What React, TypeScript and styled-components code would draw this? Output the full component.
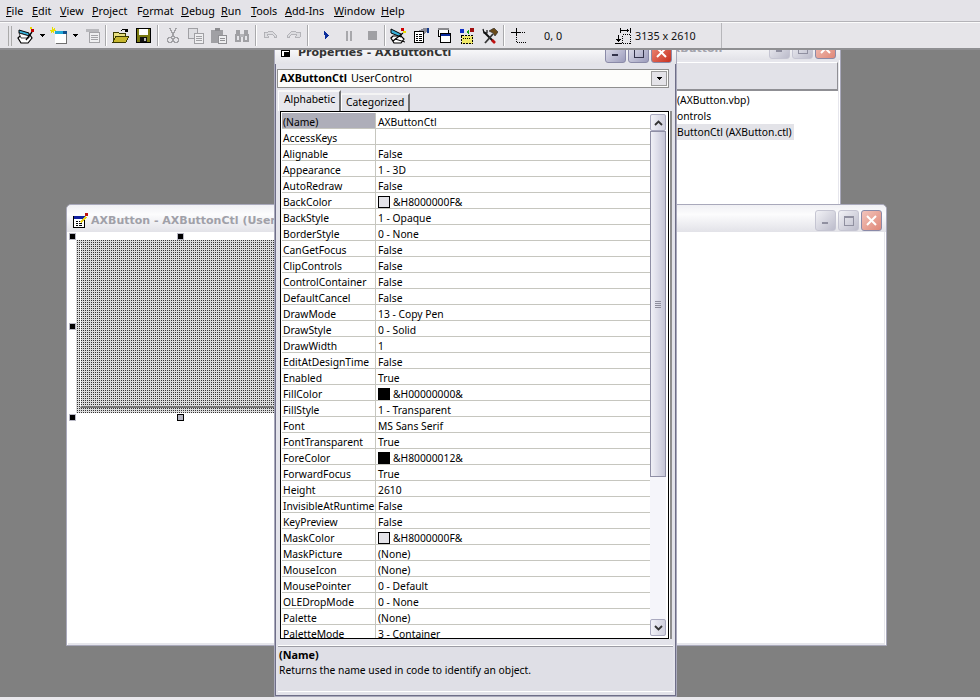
import React from "react";
import styled, { createGlobalStyle } from "styled-components";

const Global = createGlobalStyle`
  html, body { margin: 0; padding: 0; background: #e4e3e8; }
  body { font-family: "Noto Sans", "Liberation Sans", sans-serif; font-size: 10.3px; color: #000; }
`;

const Page = styled.div`
  width: 980px;
  height: 700px;
  overflow: hidden;
  display: flex;
  flex-direction: column;
  background: #e9e8ec;
`;

const MenuBar = styled.div`
  height: 22px;
  flex: none;
  display: flex;
  align-items: center;
  background: #e4e3e8;
  border-bottom: 1px solid #b4b3b8;
  box-sizing: border-box;
  font-size: 10.8px;
`;
const MenuItem = styled.span<{ $w: number }>`
  width: ${(p) => p.$w}px;
  padding-bottom: 1px;
  u { text-underline-offset: 1px; }
`;

const ToolBar = styled.div`
  height: 28px;
  flex: none;
  display: flex;
  align-items: center;
  background: #e6e5e9;
  border-top: 1px solid #fbfbfb;
  border-bottom: 2px solid #8f8f92;
  box-sizing: border-box;
  padding-left: 8px;
  position: relative;
  z-index: 5;
  font-size: 10.8px;
`;
const Grip = styled.div`
  width: 2px;
  height: 20px;
  border-left: 1px solid #aaa;
  border-right: 1px solid #aaa;
  margin-right: 2px;
`;
const ToolBtn = styled.div<{ $w?: number }>`
  width: ${(p) => p.$w ?? 23}px;
  height: 23px;
  flex: none;
  display: flex;
  align-items: center;
  justify-content: center;
`;
const Sep = styled.div<{ $l?: number; $r?: number }>`
  width: 1px;
  height: 21px;
  flex: none;
  margin: 0 ${(p) => p.$r ?? 1}px 0 ${(p) => p.$l ?? 1}px;
  background: #a9a9ac;
  border-right: 1px solid #fff;
`;
const Coord = styled.span<{ $w: number; $pad: number }>`
  width: ${(p) => p.$w}px;
  flex: none;
  box-sizing: border-box;
  padding-left: ${(p) => p.$pad}px;
  color: #111;
`;
const ToolEnd = styled.div`
  width: 1px;
  height: 100%;
  flex: none;
  background: #b6b6ba;
`;

const Desktop = styled.div`
  position: relative;
  height: 647px;
  flex: none;
  overflow: hidden;
  background: #808080;
`;

const Win = styled.div<{ $x: number; $y: number; $w: number; $h: number; $z: number }>`
  position: absolute;
  left: ${(p) => p.$x}px;
  top: ${(p) => p.$y}px;
  width: ${(p) => p.$w}px;
  height: ${(p) => p.$h}px;
  z-index: ${(p) => p.$z};
  box-sizing: border-box;
  display: flex;
  flex-direction: column;
  background: #e6e6ec;
  border: 1px solid #a9a9bb;
  border-radius: 5px 5px 0 0;
  box-shadow: inset 1px 0 0 #fff, inset -1px 0 0 #fff;
`;
const TitleBar = styled.div`
  height: 27px;
  flex: none;
  box-sizing: border-box;
  display: flex;
  align-items: center;
  padding: 3px 4px 0 6px;
  background: linear-gradient(#f0f0f4, #fcfcfd 35%, #e2e2e8);
  border-radius: 5px 5px 0 0;
`;
const TitleText = styled.span<{ $c: string; $pad: number }>`
  flex: 1;
  padding-left: ${(p) => p.$pad}px;
  white-space: nowrap;
  overflow: hidden;
  font-family: "DejaVu Sans", sans-serif;
  font-weight: bold;
  font-size: 11px;
  color: ${(p) => p.$c};
`;
const CapBtn = styled.div<{ $c?: string; $faded?: boolean }>`
  width: 21px;
  height: 21px;
  flex: none;
  margin-left: 2px;
  box-sizing: border-box;
  border: 1px solid ${(p) => (p.$faded ? "#c5c5d2" : "#8a8aa8")};
  border-radius: 3px;
  background: ${(p) =>
    p.$c ?? (p.$faded ? "linear-gradient(135deg,#f2f2f6,#bcbccb)" : "linear-gradient(135deg,#e8e8f2,#9c9cbc)")};
  display: flex;
  align-items: center;
  justify-content: center;
`;

// properties window
const PropBody = styled.div`
  flex: 1;
  display: flex;
  flex-direction: column;
  min-height: 0;
  padding: 5px 2px 3px 2px;
  background: #e3e3ea;
  border-left: 1px solid #6e6e88;
  border-right: 1px solid #6e6e88;
  border-bottom: 1px solid #6e6e88;
`;
const Combo = styled.div`
  height: 19px;
  margin: 0 4px 0 -1px;
  flex: none;
  display: flex;
  align-items: center;
  background: #fdfdfb;
  border: 1px solid #8f8f8f;
  box-sizing: border-box;
  padding: 0 0 2px 2px;
  gap: 4px;
  font-size: 10.8px;
  b { font-weight: bold; }
`;
const ComboArrow = styled.div`
  width: 16px;
  height: 15px;
  margin: 2px 1px 0 auto;
  background: #e4e3e8;
  border: 1px solid #9b9b9b;
  box-sizing: border-box;
  display: flex;
  align-items: center;
  justify-content: center;
`;
const Tabs = styled.div`
  height: 23px;
  flex: none;
  display: flex;
  align-items: flex-end;
`;
const Tab = styled.div<{ $on?: boolean }>`
  height: ${(p) => (p.$on ? 21 : 18)}px;
  width: ${(p) => (p.$on ? 63 : 69)}px;
  padding-left: ${(p) => (p.$on ? 5 : 4)}px;
  padding-bottom: ${(p) => (p.$on ? 5 : 2)}px;
  display: flex;
  align-items: center;
  box-sizing: border-box;
  background: ${(p) => (p.$on ? "#e7e7ec" : "#e3e3e8")};
  border-top: 2px solid ${(p) => (p.$on ? "#f8f8f8" : "#f4f4f4")};
  border-left: 1px solid #fff;
  border-right: 2px solid #6f6f6f;
`;
const GridFrame = styled.div`
  height: 528px;
  margin: 0 4px 0 2px;
  flex: none;
  display: flex;
  overflow: hidden;
  box-sizing: border-box;
  background: #fff;
  border: 1px solid #000;
  padding: 1px 2px 0 1px;
  box-shadow: 1px 0 0 #fff, 3px 0 0 #8e8e8e;
`;
const Rows = styled.div`
  flex: 1;
  overflow: hidden;
`;
const Row = styled.div`
  height: 16px;
  display: flex;
  box-sizing: border-box;
  border-bottom: 1px solid #c6c6bf;
  white-space: nowrap;
`;
const NameCell = styled.div<{ $sel?: boolean }>`
  width: 94px;
  flex: none;
  box-sizing: border-box;
  padding-left: 1px;
  line-height: 18px;
  background: ${(p) => (p.$sel ? "#aeaeb9" : "#fff")};
  border-right: 1px solid #c6c6bf;
`;
const ValueCell = styled.div`
  flex: 1;
  display: flex;
  align-items: center;
  padding: 1px 0 0 2px;
  height: 15px;
  line-height: 16px;
`;
const Swatch = styled.i<{ $c: string }>`
  width: 12px;
  height: 12px;
  flex: none;
  box-sizing: border-box;
  margin-right: 3px;
  background: ${(p) => p.$c};
  border: 1px solid #000;
`;
const Scroll = styled.div`
  width: 16px;
  flex: none;
  margin: 1px 0 2px;
  display: flex;
  flex-direction: column;
  background: #f5f5fa;
`;
const ScrollBtn = styled.div`
  height: 17px;
  flex: none;
  box-sizing: border-box;
  background: linear-gradient(90deg, #f2f2f8, #cfcfde);
  border: 1px solid #a9a9bf;
  border-radius: 2px;
  display: flex;
  align-items: center;
  justify-content: center;
`;
const Thumb = styled.div`
  height: 346px;
  flex: none;
  box-sizing: border-box;
  background: linear-gradient(90deg, #f0f0f6, #dcdce8 50%, #c4c4d6);
  border: 1px solid #8f8fa5;
  display: flex;
  align-items: center;
  justify-content: center;
`;
const ThumbGrip = styled.div`
  width: 6px;
  height: 7px;
  background: repeating-linear-gradient(#8e8e9c 0 1px, transparent 1px 2px);
`;
const Track = styled.div`
  flex: 1;
`;
const Desc = styled.div`
  flex: 1;
  margin-top: 7px;
  padding: 0 0 0 1px;
  border-top: 1px solid #9c9ca4;
  border-bottom: 1px solid #fff;
  box-shadow: 0 -1px 0 #fff;
  background: #dfdfe6;
  b { display: block; line-height: 16px; font-size: 10.8px; }
  span { display: block; line-height: 15px; }
`;

// project window
const StripBar = styled.div`
  height: 29px;
  flex: none;
  margin: 2px 2px 0;
  box-sizing: border-box;
  background: #e2e2e8;
  border-top: 1px solid #fff;
  border-right: 1px solid #8f8f94;
  border-bottom: 2px solid #8f8f94;
`;
const TreeList = styled.div`
  flex: 1;
  background: #fff;
  margin: 0 2px;
  padding: 1px 0 0 121px;
`;
const TreeRow = styled.div<{ $sel?: boolean }>`
  height: 16px;
  line-height: 16px;
  width: fit-content;
  padding-right: 2px;
  background: ${(p) => (p.$sel ? "#e3e3e8" : "transparent")};
`;

// form designer window
const FormCanvas = styled.div`
  flex: 1;
  margin: 0 2px 2px 1px;
  background: #fff;
  position: relative;
`;
const Hatch = styled.div`
  position: absolute;
  left: 8px;
  top: 8px;
  width: 200px;
  height: 173px;
  box-sizing: border-box;
  padding: 4px 0 5px 4px;
  background:
    linear-gradient(90deg, #dcdcdc 50%, transparent 50%) 0 0 / 2px 2px,
    linear-gradient(#333 50%, #dcdcdc 50%) 0 0 / 2px 2px;
`;
const HatchInner = styled.div`
  height: 100%;
  box-sizing: border-box;
  border-left: 1px solid #fff;
  border-bottom: 2px solid #777;
`;
const Handle = styled.div<{ $x: number; $y: number; $off?: boolean }>`
  position: absolute;
  left: ${(p) => p.$x}px;
  top: ${(p) => p.$y}px;
  width: 7px;
  height: 7px;
  box-sizing: border-box;
  background: ${(p) => (p.$off ? "#b4b4c0" : "#000")};
  border: 1px solid ${(p) => (p.$off ? "#000" : "#b8b8c4")};
`;

const rows: [string, string, string?][] = [
  ["(Name)", "AXButtonCtl"],
  ["AccessKeys", ""],
  ["Alignable", "False"],
  ["Appearance", "1 - 3D"],
  ["AutoRedraw", "False"],
  ["BackColor", "&H8000000F&", "#e4e3e8"],
  ["BackStyle", "1 - Opaque"],
  ["BorderStyle", "0 - None"],
  ["CanGetFocus", "False"],
  ["ClipControls", "False"],
  ["ControlContainer", "False"],
  ["DefaultCancel", "False"],
  ["DrawMode", "13 - Copy Pen"],
  ["DrawStyle", "0 - Solid"],
  ["DrawWidth", "1"],
  ["EditAtDesignTime", "False"],
  ["Enabled", "True"],
  ["FillColor", "&H00000000&", "#000"],
  ["FillStyle", "1 - Transparent"],
  ["Font", "MS Sans Serif"],
  ["FontTransparent", "True"],
  ["ForeColor", "&H80000012&", "#000"],
  ["ForwardFocus", "True"],
  ["Height", "2610"],
  ["InvisibleAtRuntime", "False"],
  ["KeyPreview", "False"],
  ["MaskColor", "&H8000000F&", "#e4e3e8"],
  ["MaskPicture", "(None)"],
  ["MouseIcon", "(None)"],
  ["MousePointer", "0 - Default"],
  ["OLEDropMode", "0 - None"],
  ["Palette", "(None)"],
  ["PaletteMode", "3 - Container"],
];

const menus: [string, string, string, number][] = [
  ["", "F", "ile", 26],
  ["", "E", "dit", 28],
  ["", "V", "iew", 32],
  ["", "P", "roject", 45],
  ["F", "o", "rmat", 44],
  ["", "D", "ebug", 40],
  ["", "R", "un", 30],
  ["", "T", "ools", 34],
  ["", "A", "dd-Ins", 49],
  ["", "W", "indow", 47],
  ["", "H", "elp", 40],
];

type GlyphProps = { w?: number; h?: number; children: React.ReactNode };
const Glyph = ({ w = 16, h = 16, children }: GlyphProps) => (
  <svg width={w} height={h} viewBox={`0 0 ${w} ${h}`} shapeRendering="crispEdges">
    {children}
  </svg>
);

const Arrow = () => (
  <Glyph w={5} h={3}>
    <path d="M0 0h5v1h-1v1h-1v1h-1v-1h-1v-1h-1z" fill="#000" />
  </Glyph>
);
const AddProject = () => (
  <svg width="18" height="17" viewBox="0 0 18 17">
    <path d="M1 11l3-3h9l2 3-4 5H4z" fill="#fff" stroke="#000" strokeWidth="1.200" />
    <path d="M2 3l10 3v3L2 6z" fill="#38b0d8" stroke="#000" />
    <path d="M2 6l10 3v2H4z" fill="#fff" stroke="#000" strokeWidth="0.700" />
    <path d="M9 13l6-8" stroke="#000" strokeWidth="1.300" />
    <rect x="13" y="0" width="2" height="2" fill="#e8d800" />
    <rect x="14" y="2" width="3" height="3" fill="#c00000" />
  </svg>
);
const AddForm = () => (
  <Glyph w={18} h={17}>
    <path d="M2 0h1v2h1V1h1v2h1v1H4v2H3V5H2v1H1V4H0V3h2z" fill="#e8e000" />
    <path d="M5 5h11v11H5z" fill="#fff" />
    <path d="M16 6h1v10h-1zM6 16h11v1H6z" fill="#707070" />
    <path d="M5 4h12v3H5z" fill="#20a8d8" />
    <path d="M13 4h4v3h-4z" fill="#10508c" />
  </Glyph>
);
const MenuEditor = () => (
  <Glyph>
    <path d="M1 1h13v3H1z" fill="#b8b8bc" />
    <path d="M4.500 4.500h10v10h-10z" fill="#efeff1" stroke="#a4a4a8" />
    <path d="M6 7h7M6 9h7M6 11h7" stroke="#a4a4a8" />
  </Glyph>
);
const OpenFolder = () => (
  <Glyph w={17} h={16}>
    <path d="M1 4h5l1 1h6v9H1z" fill="#e8e080" stroke="#3a3a00" />
    <path d="M1 14l3-6h13l-3 6z" fill="#c8b830" stroke="#3a3a00" />
    <path d="M9 3c2-2 4-2 5 0" fill="none" stroke="#000" />
    <path d="M13 1h3v3h-3z" fill="#000" />
  </Glyph>
);
const Save = () => (
  <Glyph w={15} h={15}>
    <rect x="0.500" y="0.500" width="14" height="14" fill="#7a7a10" stroke="#000" />
    <rect x="3" y="1" width="9" height="6" fill="#fff" />
    <rect x="4" y="9" width="7" height="5" fill="#111" />
    <rect x="8" y="10" width="2" height="3" fill="#bdbdbd" />
  </Glyph>
);
const Cut = () => (
  <Glyph w={12} h={16}>
    <path d="M3 0l4 9M9 0L5 9" stroke="#a0a0a4" strokeWidth="1.400" fill="none" />
    <circle cx="3" cy="12" r="2.500" fill="none" stroke="#a0a0a4" strokeWidth="1.400" />
    <circle cx="9" cy="12" r="2.500" fill="none" stroke="#a0a0a4" strokeWidth="1.400" />
  </Glyph>
);
const Copy = () => (
  <Glyph>
    <rect x="0.500" y="0.500" width="9" height="10" fill="#dedee2" stroke="#a0a0a4" />
    <rect x="6.500" y="5.500" width="9" height="10" fill="#eeeef0" stroke="#a0a0a4" />
    <path d="M8 8h6M8 10h6M8 12h6" stroke="#a0a0a4" />
  </Glyph>
);
const Paste = () => (
  <Glyph>
    <rect x="0" y="2" width="12" height="13" fill="#a0a0a4" />
    <rect x="4" y="0" width="5" height="3" fill="#8c8c90" />
    <rect x="7.500" y="7.500" width="8" height="8" fill="#eeeef0" stroke="#909094" />
    <path d="M9 10h5M9 12h5" stroke="#909094" />
  </Glyph>
);
const Find = () => (
  <Glyph>
    <path d="M2 2h4v4h1v8H1V6h1zM10 2h4v4h1v8H9V6h1z" fill="#a0a0a4" />
    <rect x="6" y="6" width="4" height="3" fill="#b4b4b8" />
    <rect x="3" y="8" width="2" height="4" fill="#e4e4e8" />
    <rect x="11" y="8" width="2" height="4" fill="#e4e4e8" />
  </Glyph>
);
const Undo = () => (
  <Glyph w={15} h={11}>
    <path d="M1 2v5h5L4 5c3-2 7-1 8 3l2-1C13 2 7 0 3 3z" fill="#dcdce0" stroke="#a8a8ac" strokeWidth="0.800" />
  </Glyph>
);
const Redo = () => (
  <Glyph w={15} h={11}>
    <path d="M14 2v5H9l2-2C8 3 4 4 3 8L1 7c1-5 7-7 11-4z" fill="#dcdce0" stroke="#a8a8ac" strokeWidth="0.800" />
  </Glyph>
);
const Play = () => (
  <Glyph w={5} h={9}>
    <path d="M0 0h1v1h1v1h1v1h1v1h1v1h-1v1h-1v1h-1v1h-1z" fill="#0c2f9c" />
  </Glyph>
);
const Pause = () => (
  <Glyph w={7} h={10}>
    <rect x="0" width="2" height="10" fill="#a8a8ac" />
    <rect x="4" width="2" height="10" fill="#a8a8ac" />
  </Glyph>
);
const Stop = () => (
  <Glyph w={9} h={9}>
    <rect width="9" height="9" fill="#a0a0a4" />
  </Glyph>
);
const ProjectExplorer = () => (
  <svg width="16" height="16" viewBox="0 0 16 16">
    <path d="M1 10l2-2h8l3 3-3 4H4z" fill="#fff" stroke="#000" strokeWidth="1.200" />
    <path d="M1 1l10 5v3L1 5z" fill="#38b0d8" stroke="#000" />
    <path d="M3 13l10-8" stroke="#000" strokeWidth="1.300" />
    <path d="M5 11l10 3" stroke="#000" strokeWidth="1" />
    <rect x="11" y="0" width="3" height="3" fill="#d00000" />
    <rect x="13" y="3" width="3" height="2" fill="#e8d800" />
  </svg>
);
const PropertiesIcon = () => (
  <Glyph w={17} h={16}>
    <path d="M2.500 3.500h9v11h-9z" fill="#fff" stroke="#000" />
    <path d="M4 6h2M7 6h3M4 8h2M7 8h3M4 10h2M7 10h3M4 12h2M7 12h3" stroke="#000" />
    <path d="M6 3l6-3h3v4l-3 2V3z" fill="#8a8a94" />
    <path d="M15 0h2v5h-2z" fill="#143a8c" />
  </Glyph>
);
const FormLayout = () => (
  <Glyph w={15} h={15}>
    <rect x="2.500" y="0.500" width="10" height="8" fill="#fff" stroke="#000" />
    <rect x="2" y="0" width="11" height="2" fill="#8a8a8e" />
    <rect x="4.500" y="5.500" width="10" height="9" fill="#fff" stroke="#000" />
    <rect x="5" y="6" width="9" height="2" fill="#0a2a9c" />
  </Glyph>
);
const ObjectBrowser = () => (
  <Glyph w={15} h={16}>
    <circle cx="3" cy="3" r="2.500" fill="#1030c8" />
    <path d="M7 4l3-2v4z" fill="#18a018" />
    <rect x="11" y="0" width="4" height="4" fill="#a01010" />
    <path d="M2.500 7.500h11v8h-11z" fill="#f0e868" stroke="#000" strokeDasharray="2 1" />
    <path d="M4 10h8" stroke="#000" strokeDasharray="1 1" />
  </Glyph>
);
const Toolbox = () => (
  <svg width="16" height="16" viewBox="0 0 16 16">
    <path d="M2 4l10 10" stroke="#111" strokeWidth="2" />
    <path d="M1 1l1 4 3 0 0-3" fill="none" stroke="#111" strokeWidth="1.200" />
    <path d="M10 12l3 3" stroke="#c01010" strokeWidth="2.600" />
    <path d="M3 15l8-9" stroke="#333" strokeWidth="1.800" />
    <path d="M7 3l5-3 4 4-3 4-2-3z" fill="#6a4a18" stroke="#222" strokeWidth="0.600" />
  </svg>
);
const PosIcon = () => (
  <Glyph w={15} h={15}>
    <path d="M5 0v8M0 4h9" stroke="#000" />
    <path d="M5 4h10v10H5z" fill="none" stroke="#000" strokeDasharray="1 1" />
  </Glyph>
);
const SizeIcon = () => (
  <Glyph w={16} h={16}>
    <path d="M5.500 0v5M15.500 0v5M6 2.500h8M12.500 1v3M13.500 2v1" stroke="#000" />
    <path d="M3.500 7v7M1 11.500h5M2 12.500h3M0 15.500h7" stroke="#000" />
    <path d="M7.500 6.500h8v9h-8z" fill="none" stroke="#000" strokeDasharray="1 1" />
  </Glyph>
);
const Chevron = ({ down }: { down?: boolean }) => (
  <svg width="9" height="6" viewBox="0 0 9 6">
    <path d={down ? "M1 1l3.500 3.500L8 1" : "M1 5l3.500-3.500L8 5"} fill="none" stroke="#333" strokeWidth="1.800" />
  </svg>
);
const MinGlyph = ({ c }: { c: string }) => (
  <Glyph w={9} h={9}>
    <rect x="1" y="6" width="6" height="2" fill={c} />
  </Glyph>
);
const MaxGlyph = ({ c }: { c: string }) => (
  <Glyph w={11} h={11}>
    <path d="M1 1h9v9H1z" fill="none" stroke={c} />
    <rect x="1" y="1" width="9" height="2" fill={c} />
  </Glyph>
);
const CloseGlyph = () => (
  <svg width="13" height="13" viewBox="0 0 13 13">
    <path d="M2 2l9 9M11 2l-9 9" stroke="#fff" strokeWidth="2" />
  </svg>
);
const FormIcon = () => (
  <svg width="15" height="15" viewBox="0 0 15 15" shapeRendering="crispEdges">
    <rect x="0.500" y="3.500" width="11" height="11" fill="#fff" stroke="#000" />
    <rect x="1" y="3" width="11" height="3" fill="#1020a0" />
    <path d="M3 8h2M6 8h3M3 10h2M6 10h3M3 12h2M6 12h3" stroke="#000" />
    <path d="M7 9l5-6 2 1-5 6z" fill="#e8d020" />
    <path d="M12 0h3v3h-3z" fill="#c01010" />
  </svg>
);
const SmallWinIcon = () => (
  <Glyph w={9} h={9}>
    <rect x="0.500" y="0.500" width="8" height="8" fill="#fff" stroke="#000" />
    <rect x="0" y="0" width="9" height="3" fill="#000" />
    <rect x="3" y="4" width="5" height="4" fill="#000" />
  </Glyph>
);

export default function App() {
  return (
    <Page>
      <Global />
      <MenuBar>
        <MenuItem $w={6} />
        {menus.map(([a, u, b, w]) => (
          <MenuItem key={a + u + b} $w={w}>
            {a}
            <u>{u}</u>
            {b}
          </MenuItem>
        ))}
      </MenuBar>
      <ToolBar>
        <Grip />
        <ToolBtn><AddProject /></ToolBtn>
        <ToolBtn $w={10}><Arrow /></ToolBtn>
        <ToolBtn><AddForm /></ToolBtn>
        <ToolBtn $w={11}><Arrow /></ToolBtn>
        <ToolBtn><MenuEditor /></ToolBtn>
        <Sep $r={2} />
        <ToolBtn><OpenFolder /></ToolBtn>
        <ToolBtn><Save /></ToolBtn>
        <Sep $l={2} $r={2} />
        <ToolBtn><Cut /></ToolBtn>
        <ToolBtn><Copy /></ToolBtn>
        <ToolBtn><Paste /></ToolBtn>
        <ToolBtn><Find /></ToolBtn>
        <Sep $l={2} $r={2} />
        <ToolBtn><Undo /></ToolBtn>
        <ToolBtn><Redo /></ToolBtn>
        <Sep $l={2} $r={6} />
        <ToolBtn><Play /></ToolBtn>
        <ToolBtn><Pause /></ToolBtn>
        <ToolBtn><Stop /></ToolBtn>
        <Sep $l={0} $r={0} />
        <ToolBtn><ProjectExplorer /></ToolBtn>
        <ToolBtn><PropertiesIcon /></ToolBtn>
        <ToolBtn><FormLayout /></ToolBtn>
        <ToolBtn><ObjectBrowser /></ToolBtn>
        <ToolBtn><Toolbox /></ToolBtn>
        <Sep $l={2} $r={2} />
        <ToolBtn><PosIcon /></ToolBtn>
        <Coord $w={81} $pad={14}>0, 0</Coord>
        <ToolBtn><SizeIcon /></ToolBtn>
        <Coord $w={87} $pad={1}>3135 x 2610</Coord>
        <ToolEnd />
      </ToolBar>
      <Desktop>
        <Win $x={553} $y={-18} $w={288} $h={200} $z={1}>
          <TitleBar>
            <TitleText $c="#a4a4ac" $pad={47}>Project - AXButton</TitleText>
            <CapBtn $faded><MinGlyph c="#9090a0" /></CapBtn>
            <CapBtn $faded><MaxGlyph c="#9090a0" /></CapBtn>
            <CapBtn $c="linear-gradient(135deg,#f2c4bc,#e08878)"><CloseGlyph /></CapBtn>
          </TitleBar>
          <StripBar />
          <TreeList>
            <TreeRow>(AXButton.vbp)</TreeRow>
            <TreeRow>ontrols</TreeRow>
            <TreeRow $sel>ButtonCtl (AXButton.ctl)</TreeRow>
          </TreeList>
        </Win>
        <Win $x={66} $y={154} $w={821} $h={442} $z={2}>
          <TitleBar>
            <FormIcon />
            <TitleText $c="#a0a0a8" $pad={3}>AXButton - AXButtonCtl (UserControl)</TitleText>
            <CapBtn $faded><MinGlyph c="#9090a0" /></CapBtn>
            <CapBtn $faded><MaxGlyph c="#9090a0" /></CapBtn>
            <CapBtn $c="linear-gradient(135deg,#f2c4bc,#e08878)"><CloseGlyph /></CapBtn>
          </TitleBar>
          <FormCanvas>
            <Hatch><HatchInner /></Hatch>
            <Handle $x={1} $y={1} />
            <Handle $x={109} $y={1} />
            <Handle $x={1} $y={91} />
            <Handle $x={1} $y={182} />
            <Handle $x={109} $y={182} $off />
          </FormCanvas>
        </Win>
        <Win $x={274} $y={-14} $w={403} $h={661} $z={3}>
          <TitleBar>
            <SmallWinIcon />
            <TitleText $c="#333" $pad={8}>Properties - AXButtonCtl</TitleText>
            <CapBtn><MinGlyph c="#33334a" /></CapBtn>
            <CapBtn><MaxGlyph c="#33334a" /></CapBtn>
            <CapBtn $c="linear-gradient(135deg,#f0907c,#c83020)"><CloseGlyph /></CapBtn>
          </TitleBar>
          <PropBody>
            <Combo>
              <b>AXButtonCtl</b> UserControl
              <ComboArrow><Arrow /></ComboArrow>
            </Combo>
            <Tabs>
              <Tab $on>Alphabetic</Tab>
              <Tab>Categorized</Tab>
            </Tabs>
            <GridFrame>
              <Rows>
                {rows.map(([name, value, color], i) => (
                  <Row key={name}>
                    <NameCell $sel={i === 0}>{name}</NameCell>
                    <ValueCell>
                      {color && <Swatch $c={color} />}
                      {value}
                    </ValueCell>
                  </Row>
                ))}
              </Rows>
              <Scroll>
                <ScrollBtn><Chevron /></ScrollBtn>
                <Thumb><ThumbGrip /></Thumb>
                <Track />
                <ScrollBtn><Chevron down /></ScrollBtn>
              </Scroll>
            </GridFrame>
            <Desc>
              <b>(Name)</b>
              <span>Returns the name used in code to identify an object.</span>
            </Desc>
          </PropBody>
        </Win>
      </Desktop>
    </Page>
  );
}
